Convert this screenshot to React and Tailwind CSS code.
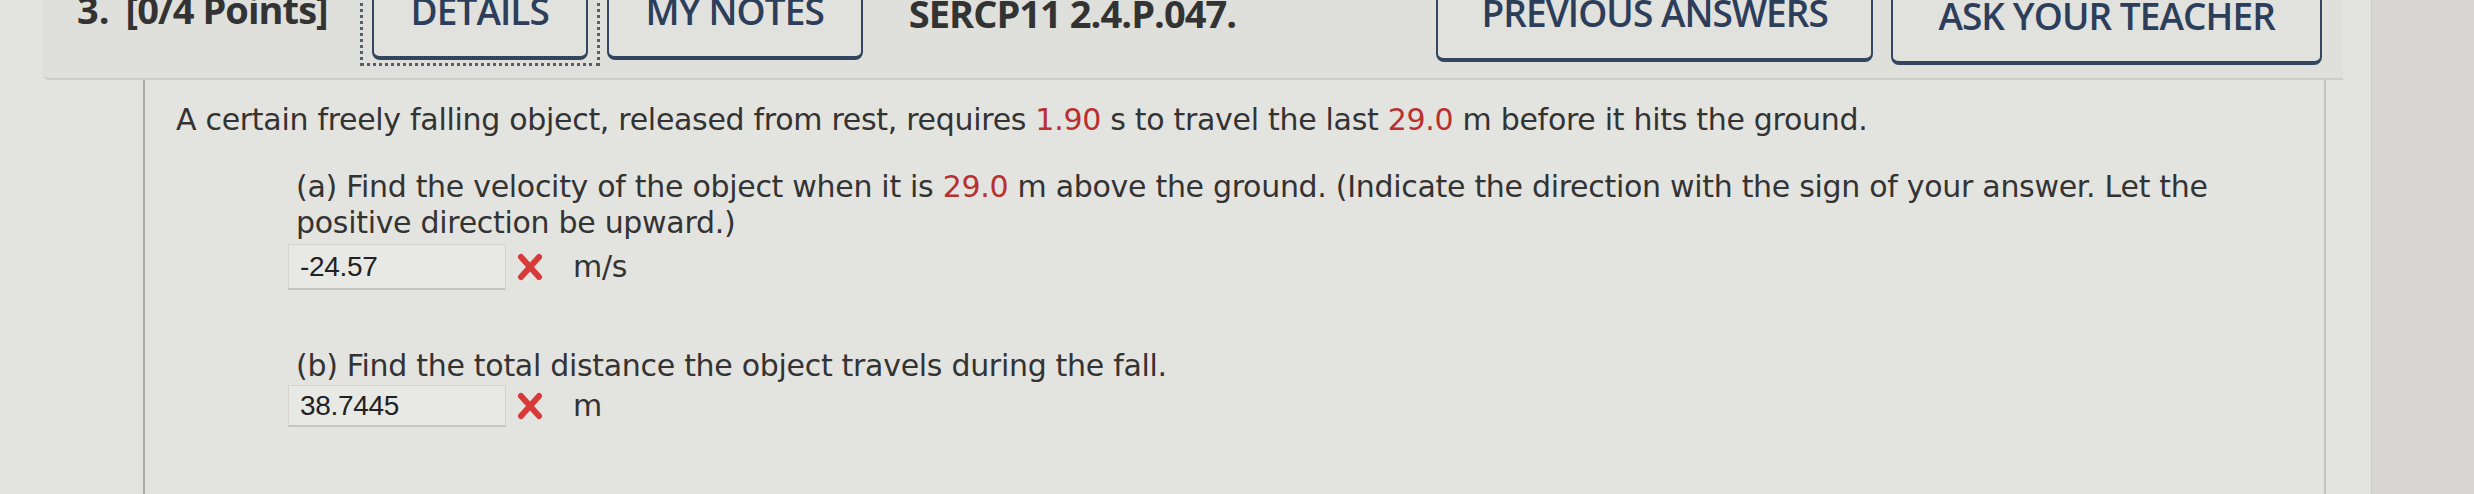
import React from 'react'

function HeaderButton({ label, className = '' }) {
  return (
    <div
      className={`flex shrink-0 items-end justify-center h-[100px] -mt-[40px] border-2 border-t-0 border-[#34465f] border-b-[4px] rounded-b-[8px] bg-[#e1e1de] ${className}`}
    >
      <span className="mb-[27px] whitespace-nowrap text-[37px] leading-none font-semibold tracking-tight text-[#2c3e5a] uppercase">
        {label}
      </span>
    </div>
  )
}

function WrongMark() {
  return (
    <svg width="30" height="30" viewBox="0 0 30 30" className="shrink-0">
      <path d="M6 5 L24 25 M24 5 L6 25" stroke="#d83a3a" strokeWidth="6" strokeLinecap="round" />
    </svg>
  )
}

function AnswerRow({ value, unit, height }) {
  return (
    <div className="flex items-center">
      <div
        className={`flex items-center w-[218px] ${height} pl-[11px] bg-[#e8e8e5] border border-[#d3d3cf] border-b-2 border-b-[#c4c4c0] text-[28px] text-[#222] font-['Liberation_Sans',Arial,sans-serif]`}
      >
        {value}
      </div>
      <div className="ml-[9px]">
        <WrongMark />
      </div>
      <span className="ml-[28px] text-[30px] text-[#333]">{unit}</span>
    </div>
  )
}

const Red = ({ children }) => <span className="text-[#b8302f]">{children}</span>

export default function App() {
  return (
    <div className="flex w-[2474px] h-[494px] overflow-hidden bg-[#d7d6d2] font-['Open_Sans',sans-serif]">
      <div className="flex shrink-0 flex-col w-[2372px] bg-[#e3e3e0] border-r border-[#c9c9c5]">
        {/* question header */}
        <div className="flex shrink-0 items-start ml-[43px] w-[2300px] h-[80px] pl-[34px] bg-[#dfdfdb] border-b-2 border-[#cdcdc9] rounded-bl-[6px]">
          <span className="shrink-0 whitespace-nowrap mt-[-10px] text-[38px] leading-none font-bold text-[#333]">3.</span>
          <span className="shrink-0 whitespace-nowrap ml-[16px] mt-[-10px] text-[38px] leading-none font-bold tracking-tight text-[#333]">
            [0/4 Points]
          </span>
          <div className="shrink-0 ml-[32px] -mt-[40px] h-[106px] w-[240px] px-[9px] pb-[10px] border-[3px] border-t-0 border-dotted border-[#555d6a]">
            <HeaderButton label="Details" className="mt-0 h-[91px] w-full" />
          </div>
          <HeaderButton label="My Notes" className="ml-[7px] h-[93px] w-[256px]" />
          <span className="shrink-0 whitespace-nowrap ml-[46px] mt-[-6px] text-[38px] leading-none font-bold tracking-tight text-[#333]">
            SERCP11 2.4.P.047.
          </span>
          <HeaderButton label="Previous Answers" className="ml-[200px] h-[102px] w-[437px]" />
          <HeaderButton label="Ask Your Teacher" className="ml-[18px] h-[105px] w-[431px]" />
        </div>

        {/* question body */}
        <div className="flex flex-1">
          <div className="w-[145px] shrink-0 border-r-2 border-[#a9a9a6]" />
          <div className="flex-1 pt-[22px] pl-[31px] border-r-2 border-[#c3c3bf] mr-[45px] font-['DejaVu_Sans',Verdana,sans-serif] text-[30px] leading-[36px] text-[#333] tracking-[-0.3px]">
            <p className="whitespace-nowrap">
              A certain freely falling object, released from rest, requires <Red>1.90</Red> s to travel the last{' '}
              <Red>29.0</Red> m before it hits the ground.
            </p>
            <div className="ml-[120px] mt-[31px] w-[1960px]">
              <p>
                (a) Find the velocity of the object when it is <Red>29.0</Red> m above the ground. (Indicate the
                direction with the sign of your answer. Let the positive direction be upward.)
              </p>
              <div className="mt-[3px] -ml-[8px]">
                <AnswerRow value="-24.57" unit="m/s" height="h-[46px]" />
              </div>
              <p className="mt-[58px]">(b) Find the total distance the object travels during the fall.</p>
              <div className="mt-[1px] -ml-[8px]">
                <AnswerRow value="38.7445" unit="m" height="h-[42px]" />
              </div>
            </div>
          </div>
        </div>
      </div>
      <div className="flex-1" />
    </div>
  )
}
